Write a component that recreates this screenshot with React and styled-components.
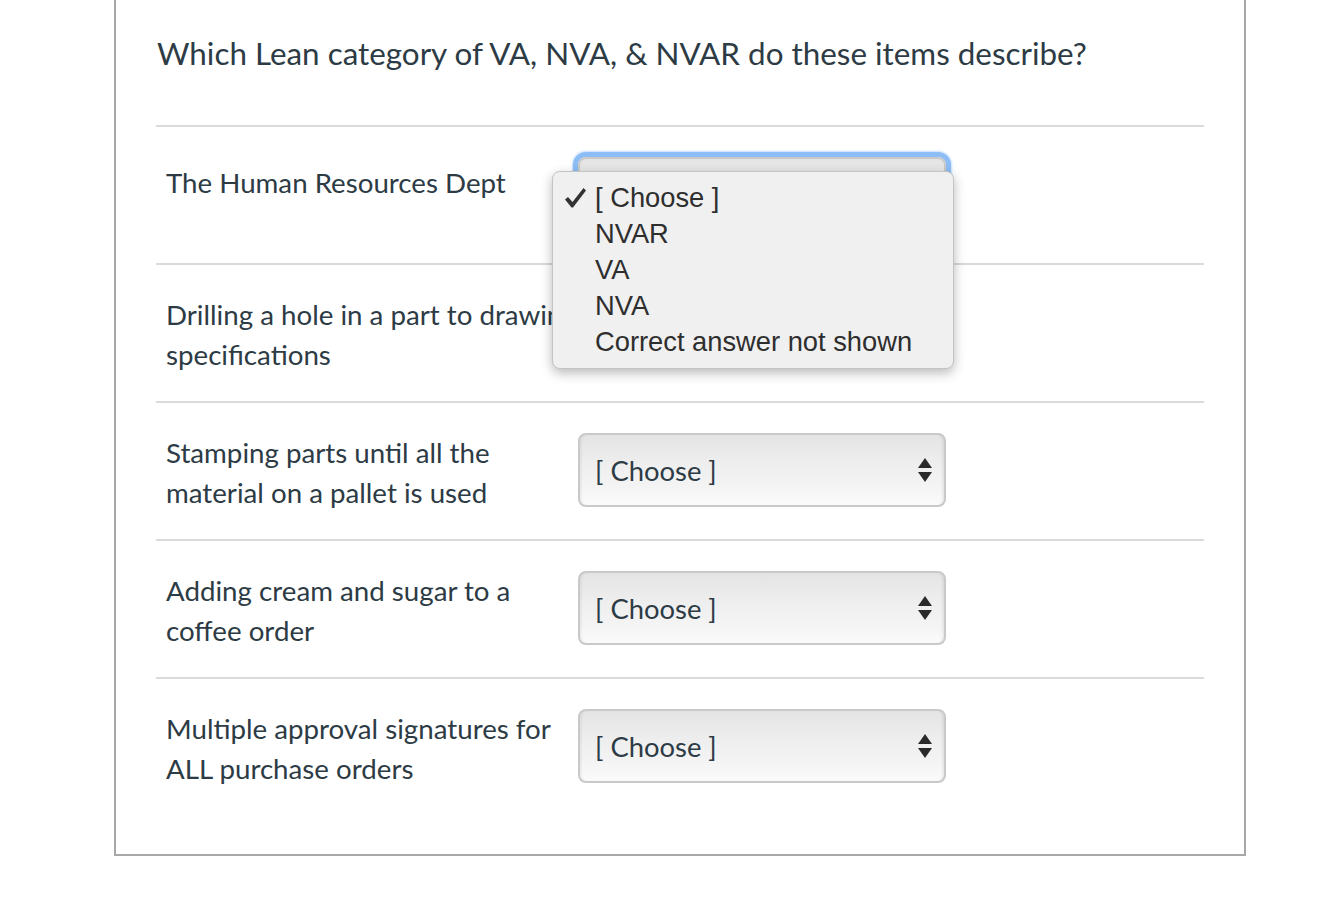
import React from "react";
import styled, { createGlobalStyle } from "styled-components";

const GlobalStyle = createGlobalStyle`
    html, body {
        margin: 0;
        padding: 0;
        background: #ffffff;
    }
    body {
        font-family: Lato, "Open Sans", sans-serif;
        color: #2d3b45;
    }
`;

const Card = styled.div`
    box-sizing: border-box;
    width: 1132px;
    margin-left: 114px;
    border: 2px solid #a8a8a8;
    border-top: none;
    padding: 34px 40px 39px 40px;
`;

const Title = styled.div`
    font-size: 31.4px;
    line-height: 38px;
    margin: 0 0 53px 1px;
    color: #2d3b45;
    white-space: nowrap;
`;

const Row = styled.div`
    display: flex;
    align-items: flex-start;
    height: 136px;
    border-top: 2px solid #dadada;
`;

const Label = styled.div`
    box-sizing: border-box;
    flex: 0 0 422px;
    padding: ${props => props.offset}px 0 0 10px;
    font-size: 27.7px;
    line-height: 40px;
    color: #2d3b45;
`;

const LabelLine = styled.div`
    white-space: nowrap;
`;

const SelectWrap = styled.div`
    position: relative;
    margin-top: 30px;
`;

const SelectBox = styled.div`
    box-sizing: border-box;
    display: flex;
    align-items: center;
    justify-content: space-between;
    width: 368px;
    height: 74px;
    padding: 0 12px 0 15px;
    border: 2px solid #c9c9c9;
    border-radius: 8px;
    background: linear-gradient(to bottom, #e4e4e4 0%, #efefef 45%, #f4f4f4 75%, #fbfbfb 100%);
    box-shadow: ${props => props.focused
        ? "0 0 0 5px #8dbdf6, 0 0 2px 6px rgba(141, 189, 246, 0.5)"
        : "inset 3px 0 3px -2px rgba(0,0,0,0.08), inset -3px 0 3px -2px rgba(0,0,0,0.1)"};
    font-size: 27.4px;
    color: #2d3b45;
`;

const Menu = styled.div`
    position: absolute;
    left: -26px;
    top: 14px;
    width: 402px;
    box-sizing: border-box;
    padding: 8px 0 8px 0;
    background: #f0f0f0;
    border: 1px solid #c4c4c4;
    border-radius: 8px;
    box-shadow: 0 4px 12px rgba(0, 0, 0, 0.28);
    z-index: 5;
`;

const MenuItem = styled.div`
    position: relative;
    height: 36px;
    line-height: 36px;
    padding-left: 42px;
    font-family: "Liberation Sans", Arial, sans-serif;
    font-size: 27.3px;
    color: #2e2e2e;
`;

const Check = styled.svg`
    position: absolute;
    left: 10px;
    top: 7px;
`;

const Arrows = () => (
    <svg width="14" height="24" viewBox="0 0 14 24">
        <path d="M7 0 L14 10 L0 10 Z" fill="#2a2a2a" />
        <path d="M0 14 L14 14 L7 24 Z" fill="#2a2a2a" />
    </svg>
);

const options = ["[ Choose ]", "NVAR", "VA", "NVA", "Correct answer not shown"];

const items = [
    { lines: ["The Human Resources Dept"], offset: 36, open: true },
    { lines: ["Drilling a hole in a part to drawing", "specifications"], offset: 30 },
    { lines: ["Stamping parts until all the", "material on a pallet is used"], offset: 30 },
    { lines: ["Adding cream and sugar to a", "coffee order"], offset: 30 },
    { lines: ["Multiple approval signatures for", "ALL purchase orders"], offset: 30 },
];

const App = () => {
    return (
        <>
            <GlobalStyle />
            <Card>
                <Title>Which Lean category of VA, NVA, &amp; NVAR do these items describe?</Title>
                {items.map((item) => (
                    <Row key={item.lines[0]}>
                        <Label offset={item.offset}>
                            {item.lines.map(line => <LabelLine key={line}>{line}</LabelLine>)}
                        </Label>
                        <SelectWrap>
                            <SelectBox focused={item.open}>
                                <span>{item.open ? "" : "[ Choose ]"}</span>
                                {!item.open && <Arrows />}
                            </SelectBox>
                            {item.open && (
                                <Menu>
                                    {options.map((opt, i) => (
                                        <MenuItem key={opt}>
                                            {i === 0 && (
                                                <Check width="24" height="22" viewBox="0 0 24 22">
                                                    <path d="M2 12.5 L5 10 L9.5 15 L20.5 1 L23 3.5 L10 20.5 L8.5 20.5 Z" fill="#333333" />
                                                </Check>
                                            )}
                                            {opt}
                                        </MenuItem>
                                    ))}
                                </Menu>
                            )}
                        </SelectWrap>
                    </Row>
                ))}
            </Card>
        </>
    );
};

export default App;
